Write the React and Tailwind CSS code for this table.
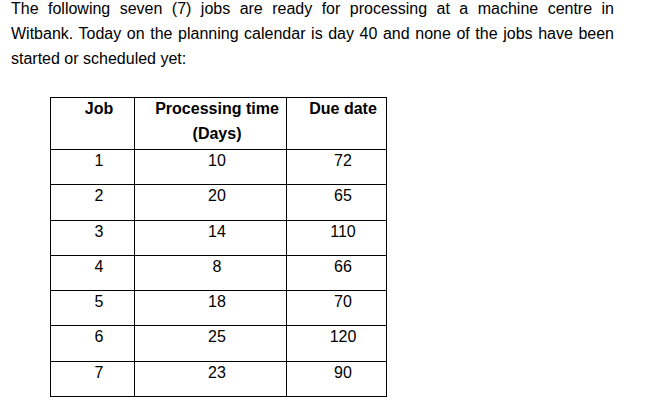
import React from "react";

const rows = [
  ["1", "10", "72"],
  ["2", "20", "65"],
  ["3", "14", "110"],
  ["4", "8", "66"],
  ["5", "18", "70"],
  ["6", "25", "120"],
  ["7", "23", "90"],
];

const cell = "border border-black align-top text-center pl-[13px] pr-0 p-0";

export default function App() {
  return (
    <div
      className="w-[658px] h-[408px] bg-white text-black overflow-hidden"
      style={{ fontFamily: '"Liberation Sans", Arial, sans-serif' }}
    >
      <p className="ml-[11px] w-[603px] -mt-[4px] text-[16px] leading-[25px] text-justify">
        The following seven (7) jobs are ready for processing at a machine centre in
        Witbank. Today on the planning calendar is day 40 and none of the jobs have been
        started or scheduled yet:
      </p>

      <table className="ml-[50px] mt-[26px] border-collapse text-[16px] leading-[25px]">
        <thead>
          <tr className="h-[52px]">
            <th className={`${cell} w-[84px] font-bold`}>
              <div className="-mt-[2px]">Job</div>
            </th>
            <th className={`${cell} w-[152px] font-bold`}>
              <div className="-mt-[2px]">
                Processing time
                <br />
                (Days)
              </div>
            </th>
            <th className={`${cell} w-[100px] font-bold`}>
              <div className="-mt-[2px]">Due date</div>
            </th>
          </tr>
        </thead>
        <tbody>
          {rows.map((r) => (
            <tr key={r[0]} className="h-[35.3px]">
              {r.map((v, i) => (
                <td key={i} className={cell}>
                  <div className="-mt-[2px]">{v}</div>
                </td>
              ))}
            </tr>
          ))}
        </tbody>
      </table>
    </div>
  );
}
